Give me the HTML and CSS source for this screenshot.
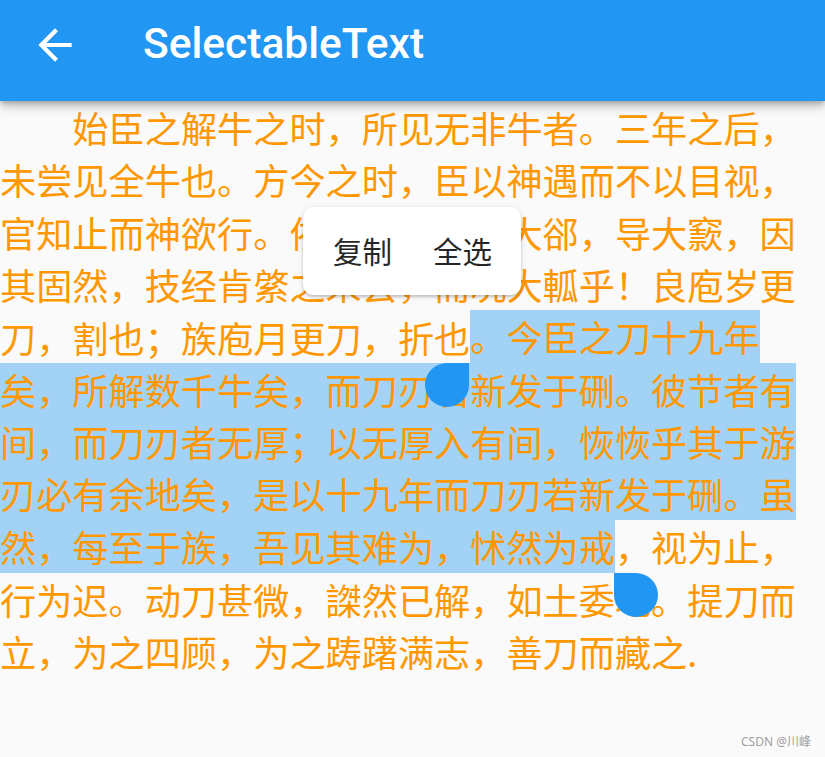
FILE: index.html
```html
<!DOCTYPE html>
<html lang="zh-CN">
<head>
<meta charset="utf-8">
<title>SelectableText</title>
<link rel="stylesheet" href="styles.css">
</head>
<body>
<header class="appbar">
  <span class="back">
    <svg viewBox="0 0 24 24" width="50" height="50"><path d="M20 11H7.83l5.59-5.59L12 4l-8 8 8 8 1.41-1.41L7.83 13H20v-2z" fill="#ffffff"/></svg>
  </span>
  <h1 class="title">SelectableText</h1>
</header>
<main class="content">
  <p class="passage">始臣之解牛之时，所见无非牛者。三年之后，未尝见全牛也。方今之时，臣以神遇而不以目视，官知止而神欲行。依乎天理，批大郤，导大窾，因其固然，技经肯綮之未尝，而况大軱乎！良庖岁更刀，割也；族庖月更刀，折也<span class="sel">。今臣之刀十九年矣，所解数千牛矣，而刀刃若新发于硎。彼节者有间，而刀刃者无厚；以无厚入有间，恢恢乎其于游刃必有余地矣，是以十九年而刀刃若新发于硎。虽然，每至于族，吾见其难为，怵然为戒</span>，视为止，行为迟。动刀甚微，謋然已解，如土委地。提刀而立，为之四顾，为之踌躇满志，善刀而藏之.</p>
  <div class="handle handle-left"></div>
  <div class="handle handle-right"></div>
  <div class="toolbar">
    <span class="tb-btn">复制</span>
    <span class="tb-btn">全选</span>
  </div>
</main>
<div class="watermark">CSDN @川峰</div>
</body>
</html>
```
FILE: styles.css
```css
html, body {
  margin: 0;
  padding: 0;
}
body {
  background: #fafafa;
  width: 825px;
  height: 757px;
  overflow: hidden;
  position: relative;
  font-family: "Noto Sans CJK SC", "Noto Sans", sans-serif;
}
.appbar {
  position: relative;
  z-index: 2;
  height: 101px;
  box-sizing: border-box;
  padding: 0 0 12px 30px;
  background: #2196f3;
  display: flex;
  align-items: center;
  box-shadow: 0 3px 5px -1px rgba(0,0,0,0.2), 0 6px 9px 0 rgba(0,0,0,0.14), 0 2px 16px 0 rgba(0,0,0,0.12);
}
.back {
  display: flex;
  width: 50px;
  height: 50px;
}
.title {
  margin: 0 0 0 63px;
  font-family: Roboto, "Noto Sans", sans-serif;
  font-weight: 500;
  font-size: 42.5px;
  line-height: 1;
  color: #ffffff;
  letter-spacing: 0;
}
.content {
  position: relative;
}
.passage {
  margin: 0;
  width: 805px;
  font-size: 36.18px;
  line-height: 52.4px;
  color: #ff9800;
  text-indent: 2em;
  text-spacing-trim: space-all;
  word-break: normal;
  line-break: strict;
}
.sel {
  background: #a3d2f7;
  padding: 0.4px 0;
}
.handle {
  position: absolute;
  width: 44px;
  height: 44px;
  background: #2196f3;
}
.handle-left {
  left: 425px;
  top: 262px;
  border-radius: 50% 0 50% 50%;
}
.handle-right {
  left: 614px;
  top: 472px;
  border-radius: 0 50% 50% 50%;
}
.toolbar {
  position: absolute;
  left: 303px;
  top: 106px;
  width: 218px;
  height: 88px;
  box-sizing: border-box;
  padding: 0 0 0 30px;
  background: #ffffff;
  border-radius: 10px;
  display: flex;
  align-items: center;
  gap: 41px;
  white-space: nowrap;
  box-shadow: 0 2px 3px rgba(0,0,0,0.18), 0 1px 6px rgba(0,0,0,0.1);
}
.tb-btn {
  flex: none;
  font-size: 29.5px;
  line-height: 1;
  color: #262626;
  white-space: nowrap;
}
.watermark {
  position: absolute;
  right: 14px;
  bottom: 7px;
  font-family: "Noto Sans", "Noto Sans CJK SC", sans-serif;
  font-size: 12px;
  color: #a0a0a0;
  line-height: 16px;
}
```
